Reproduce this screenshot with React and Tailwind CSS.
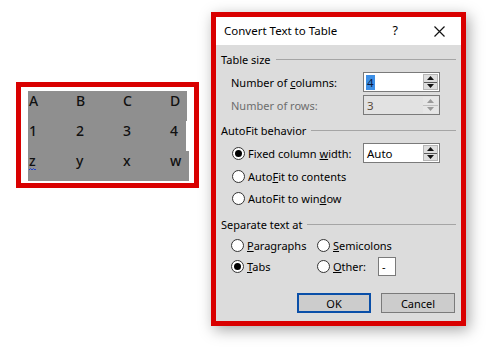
import React from 'react';

const font = { fontFamily: '"Noto Sans", "Liberation Sans", sans-serif' };

const rows = [
    { cells: ['A', 'B', 'C', 'D'], width: 'w-[159px]' },
    { cells: ['1', '2', '3', '4'], width: 'w-[158px]' },
    { cells: ['z', 'y', 'x', 'w'], width: 'w-[161px]' },
];

const Squiggle = () => (
    <svg className="absolute left-[1px] top-[17px]" width="7" height="3" viewBox="0 0 7 3">
        <path d="M0 2 L1.5 0.5 L3 2 L4.5 0.5 L6 2 L7 1" fill="none" stroke="#1c3fd0" strokeWidth="1" />
    </svg>
);

const Heading = ({ children }) => (
    <div className="h-[20px] flex items-center pl-[5px] pr-[5px] gap-[5px]">
        <span className="text-[11px] text-black leading-none whitespace-nowrap">{children}</span>
        <div className="flex-1 h-px bg-[#a5a5a5] mt-[1px]" />
    </div>
);

const Radio = ({ checked, children, className = '' }) => (
    <div className={`h-[20px] flex items-center gap-[3px] ${className}`}>
        <span className="w-[13px] h-[13px] rounded-full border border-[#333333] bg-white flex items-center justify-center shrink-0">
            {checked && <span className="w-[7px] h-[7px] rounded-full bg-black" />}
        </span>
        <span className="text-[11px] text-black leading-none whitespace-nowrap">{children}</span>
    </div>
);

const Arrow = ({ up, disabled }) => (
    <svg width="7" height="4" viewBox="0 0 7 4">
        <path d={up ? 'M0 4 L3.5 0 L7 4 Z' : 'M0 0 L3.5 4 L7 0 Z'} fill={disabled ? '#9a9a9a' : '#111111'} />
    </svg>
);

const SpinInput = ({ value, selected, disabled }) => (
    <div className={`w-[77px] h-[20px] border border-[#7a7a7a] flex shrink-0 ${disabled ? 'bg-[#e2e2e2]' : 'bg-white'}`}>
        <div className="flex-1 flex items-center pl-[2px]">
            <span className={`text-[11.5px] leading-[15px] px-[1px] ${selected ? 'bg-[#3d8fe6] text-[#0b1b3f]' : disabled ? 'text-[#5a4a3a]' : 'text-black'}`}>
                {value}
            </span>
        </div>
        <div className={`w-[15px] mr-[1px] my-[1px] flex flex-col ${disabled ? 'bg-[#e6e6e6]' : 'bg-[#dedede] border border-[#b5b5b5]'}`}>
            <div className="flex-1 flex items-center justify-center">
                <Arrow up disabled={disabled} />
            </div>
            <div className={`h-px ${disabled ? 'bg-[#c0c0c0]' : 'bg-[#5a5a5a]'}`} />
            <div className="flex-1 flex items-center justify-center">
                <Arrow disabled={disabled} />
            </div>
        </div>
    </div>
);

const App = () => {
    return (
        <div className="w-[502px] h-[354px] bg-white flex items-start pl-4 pt-3 overflow-hidden" style={font}>
            {/* text before conversion */}
            <div className="mt-[70px] w-[183px] h-[106px] border-[5px] border-[#d90000] bg-white pl-[7px] pt-[4px] shrink-0">
                {rows.map((row, i) => (
                    <div key={i} className={`${row.width} h-[30px] bg-[#8f8f8f] flex overflow-hidden`}>
                        {row.cells.map((c, j) => (
                            <div key={j} className="relative w-[47px] shrink-0 pl-px text-[14px] leading-[20px] font-medium text-[#111111]">
                                {c}
                                {c === 'z' && <Squiggle />}
                            </div>
                        ))}
                    </div>
                ))}
            </div>

            {/* dialog */}
            <div className="ml-[12px] w-[255px] h-[314px] border-[5px] border-[#d90000] shadow-[3px_4px_14px_rgba(0,0,0,0.35)] flex flex-col shrink-0">
                <div className="h-[28px] bg-white flex items-center pl-[8px] pr-[16px]">
                    <span className="text-[11.5px] text-black flex-1">Convert Text to Table</span>
                    <span className="text-[12.5px] text-black mr-[36px]">?</span>
                    <svg width="11" height="11" viewBox="0 0 11 11">
                        <path d="M0.5 0.5 L10.5 10.5 M10.5 0.5 L0.5 10.5" stroke="#111111" strokeWidth="1.2" />
                    </svg>
                </div>

                <div className="flex-1 bg-[#dcdcdc] pt-[4px] flex flex-col">
                    <Heading>Table size</Heading>
                    <div className="mt-[3px] h-[20px] flex items-center pl-[15px]">
                        <span className="w-[132px] text-[11px] text-black leading-none">
                            Number of <u>c</u>olumns:
                        </span>
                        <SpinInput value="4" selected />
                    </div>
                    <div className="mt-[3px] h-[20px] flex items-center pl-[15px]">
                        <span className="w-[132px] text-[11px] text-[#6d6d6d] leading-none">Number of rows:</span>
                        <SpinInput value="3" disabled />
                    </div>

                    <div className="mt-[5px]">
                        <Heading>AutoFit behavior</Heading>
                    </div>
                    <div className="mt-[3px] h-[20px] flex items-center pl-[16px]">
                        <div className="w-[131px]">
                            <Radio checked>
                                Fixed column <u>w</u>idth:
                            </Radio>
                        </div>
                        <SpinInput value="Auto" />
                    </div>
                    <Radio className="mt-[3px] pl-[16px]">
                        Auto<u>F</u>it to contents
                    </Radio>
                    <Radio className="mt-[2px] pl-[16px]">
                        AutoFit to win<u>d</u>ow
                    </Radio>

                    <div className="mt-[6px]">
                        <Heading>Separate text at</Heading>
                    </div>
                    <div className="mt-[1px] flex pl-[15px]">
                        <Radio className="w-[86px]">
                            <u>P</u>aragraphs
                        </Radio>
                        <Radio>
                            <u>S</u>emicolons
                        </Radio>
                    </div>
                    <div className="mt-[1px] flex items-center pl-[15px]">
                        <Radio className="w-[86px]" checked>
                            <u>T</u>abs
                        </Radio>
                        <Radio>
                            <u>O</u>ther:
                        </Radio>
                        <div className="ml-[12px] w-[18px] h-[19px] bg-white border border-[#7a7a7a] flex items-center pl-[3px] text-[11px] text-black leading-none">
                            -
                        </div>
                    </div>

                    <div className="mt-[17px] flex justify-end gap-[10px] pr-[6px]">
                        <button className="w-[74px] h-[20px] bg-[#cccccc] border-2 border-[#0a4fa8] text-[11px] text-black leading-none">
                            OK
                        </button>
                        <button className="w-[74px] h-[20px] bg-[#cccccc] border border-[#7a7a7a] text-[11px] text-black leading-none">
                            Cancel
                        </button>
                    </div>
                </div>
            </div>
        </div>
    );
};

export default App;
